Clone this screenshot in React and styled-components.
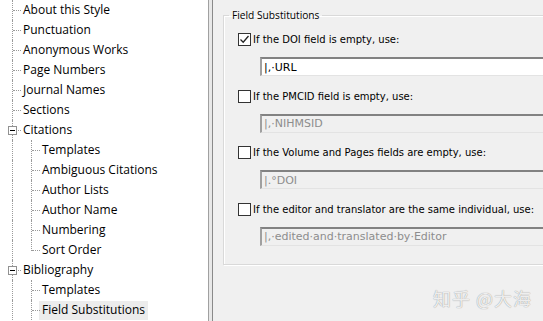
import React from "react";
import styled, { createGlobalStyle } from "styled-components";

const Global = createGlobalStyle`
  html, body { margin: 0; padding: 0; background: #f0f0f0; overflow: hidden; }
  * { box-sizing: border-box; }
`;

const Window = styled.div`
  position: relative;
  display: flex;
  width: 543px;
  height: 321px;
  overflow: hidden;
  background: #f0f0f0;
`;

const TreePane = styled.div`
  width: 208px;
  flex: none;
  background: #fff;
  font-family: "Open Sans", "Noto Sans", sans-serif;
  font-size: 12px;
  color: #000;
`;

const Splitter = styled.div`
  width: 5px;
  flex: none;
  border-left: 1px solid #a0a0a0;
  border-right: 1px solid #8a8a8a;
  background: #e8e8e8;
`;

const Row = styled.div`
  position: relative;
  height: 20px;
  display: flex;
  align-items: center;
  padding-left: ${(p) => (p.$level === 1 ? 20 : 39)}px;
  white-space: nowrap;
`;

const VLine = styled.span`
  position: absolute;
  left: ${(p) => p.$x}px;
  top: 0;
  height: ${(p) => (p.$half ? "11px" : "20px")};
  border-left: 1px dotted #9a9a9a;
`;

const HLine = styled.span`
  position: absolute;
  left: ${(p) => p.$x}px;
  top: 10px;
  width: ${(p) => p.$w}px;
  border-top: 1px dotted #9a9a9a;
`;

const Expander = styled.span`
  position: absolute;
  left: 8px;
  top: 6px;
  width: 9px;
  height: 9px;
  border: 1px solid #919191;
  background: #fff;
  &::after {
    content: "";
    position: absolute;
    left: 1px;
    top: 3px;
    width: 5px;
    height: 1px;
    background: #000;
  }
`;

const Label = styled.span`
  padding: 1px 3px 2px;
  line-height: 16px;
  background: ${(p) => (p.$selected ? "#ececec" : "transparent")};
`;

const RightPane = styled.div`
  flex: 1;
  min-width: 0;
  padding: 8px 0 0 10px;
  overflow: hidden;
`;

const Group = styled.fieldset`
  margin: 0;
  width: 360px;
  padding: 9px 0 18px 0;
  border: 1px solid #d9d9d9;
  box-shadow: inset 1px 1px 0 #fff, 1px 1px 0 #fff;
`;

const Legend = styled.legend`
  margin-left: 5px;
  padding: 0 3px;
  font-family: "Open Sans", "Noto Sans", sans-serif;
  font-size: 10.2px;
  line-height: 14px;
  color: #000;
`;

const Options = styled.div`
  padding-left: 14px;
`;

const Option = styled.div`
  display: flex;
  flex-direction: column;
  & + & { margin-top: 11.5px; }
`;

const CheckRow = styled.label`
  display: flex;
  align-items: center;
  height: 17px;
  gap: 2px;
  font-family: "DejaVu Sans", Tahoma, sans-serif;
  font-size: 10px;
  color: #000;
`;

const Box = styled.span`
  position: relative;
  width: 13px;
  height: 13px;
  flex: none;
  border: 1px solid #333;
  background: #fff;
`;

const Field = styled.div`
  margin: 9px 0 0 22px;
  height: 19px;
  display: flex;
  align-items: center;
  padding-left: 2px;
  border-top: 2px solid;
  border-left: 2px solid;
  border-color: #828282 #e3e3e3 #e3e3e3 #a0a0a0;
  border-bottom: 1px solid #e3e3e3;
  background: ${(p) => (p.$disabled ? "#f0f0f0" : "#fff")};
  color: ${(p) => (p.$disabled ? "#8d8d8d" : "#000")};
  font-family: "DejaVu Sans", Tahoma, sans-serif;
  font-size: 11px;
  white-space: nowrap;
`;

const Watermark = styled.div`
  position: absolute;
  left: 433px;
  top: 285px;
  font-family: "Noto Sans CJK SC", sans-serif;
  font-size: 18px;
  color: rgba(255, 255, 255, 0.85);
  text-shadow: 0 0 1px rgba(0, 0, 0, 0.3), 0 0 1px rgba(0, 0, 0, 0.2);
  letter-spacing: 1px;
`;

const tree = [
  { t: "About this Style", l: 1 },
  { t: "Punctuation", l: 1 },
  { t: "Anonymous Works", l: 1 },
  { t: "Page Numbers", l: 1 },
  { t: "Journal Names", l: 1 },
  { t: "Sections", l: 1 },
  { t: "Citations", l: 1, exp: true },
  { t: "Templates", l: 2 },
  { t: "Ambiguous Citations", l: 2 },
  { t: "Author Lists", l: 2 },
  { t: "Author Name", l: 2 },
  { t: "Numbering", l: 2 },
  { t: "Sort Order", l: 2, last: true },
  { t: "Bibliography", l: 1, exp: true },
  { t: "Templates", l: 2 },
  { t: "Field Substitutions", l: 2, sel: true },
];

const options = [
  { label: "If the DOI field is empty, use:", value: "|,·URL", checked: true },
  { label: "If the PMCID field is empty, use:", value: "|,·NIHMSID" },
  { label: "If the Volume and Pages fields are empty, use:", value: "|.°DOI" },
  {
    label: "If the editor and translator are the same individual, use:",
    value: "|,·edited·and·translated·by·Editor",
  },
];

function Check({ checked }) {
  return (
    <Box>
      {checked && (
        <svg width="11" height="11" viewBox="0 0 11 11" style={{ position: "absolute", left: 0, top: 0 }}>
          <path d="M1.5 5.5 L4.2 8.2 L9.5 2" fill="none" stroke="#222" strokeWidth="1.3" />
        </svg>
      )}
    </Box>
  );
}

export default function App() {
  return (
    <Window>
      <Global />
      <TreePane>
        {tree.map((n, i) => (
          <Row key={i} $level={n.l}>
            <VLine $x={12} />
            {n.l === 2 && <VLine $x={31} $half={n.last} />}
            <HLine $x={n.l === 1 ? 13 : 32} $w={8} />
            {n.exp && <Expander />}
            <Label $selected={n.sel}>{n.t}</Label>
          </Row>
        ))}
      </TreePane>
      <Splitter />
      <RightPane>
        <Group>
          <Legend>Field Substitutions</Legend>
          <Options>
            {options.map((o, i) => (
              <Option key={i}>
                <CheckRow>
                  <Check checked={o.checked} />
                  {o.label}
                </CheckRow>
                <Field $disabled={!o.checked}>{o.value}</Field>
              </Option>
            ))}
          </Options>
        </Group>
      </RightPane>
      <Watermark>知乎 @大海</Watermark>
    </Window>
  );
}
